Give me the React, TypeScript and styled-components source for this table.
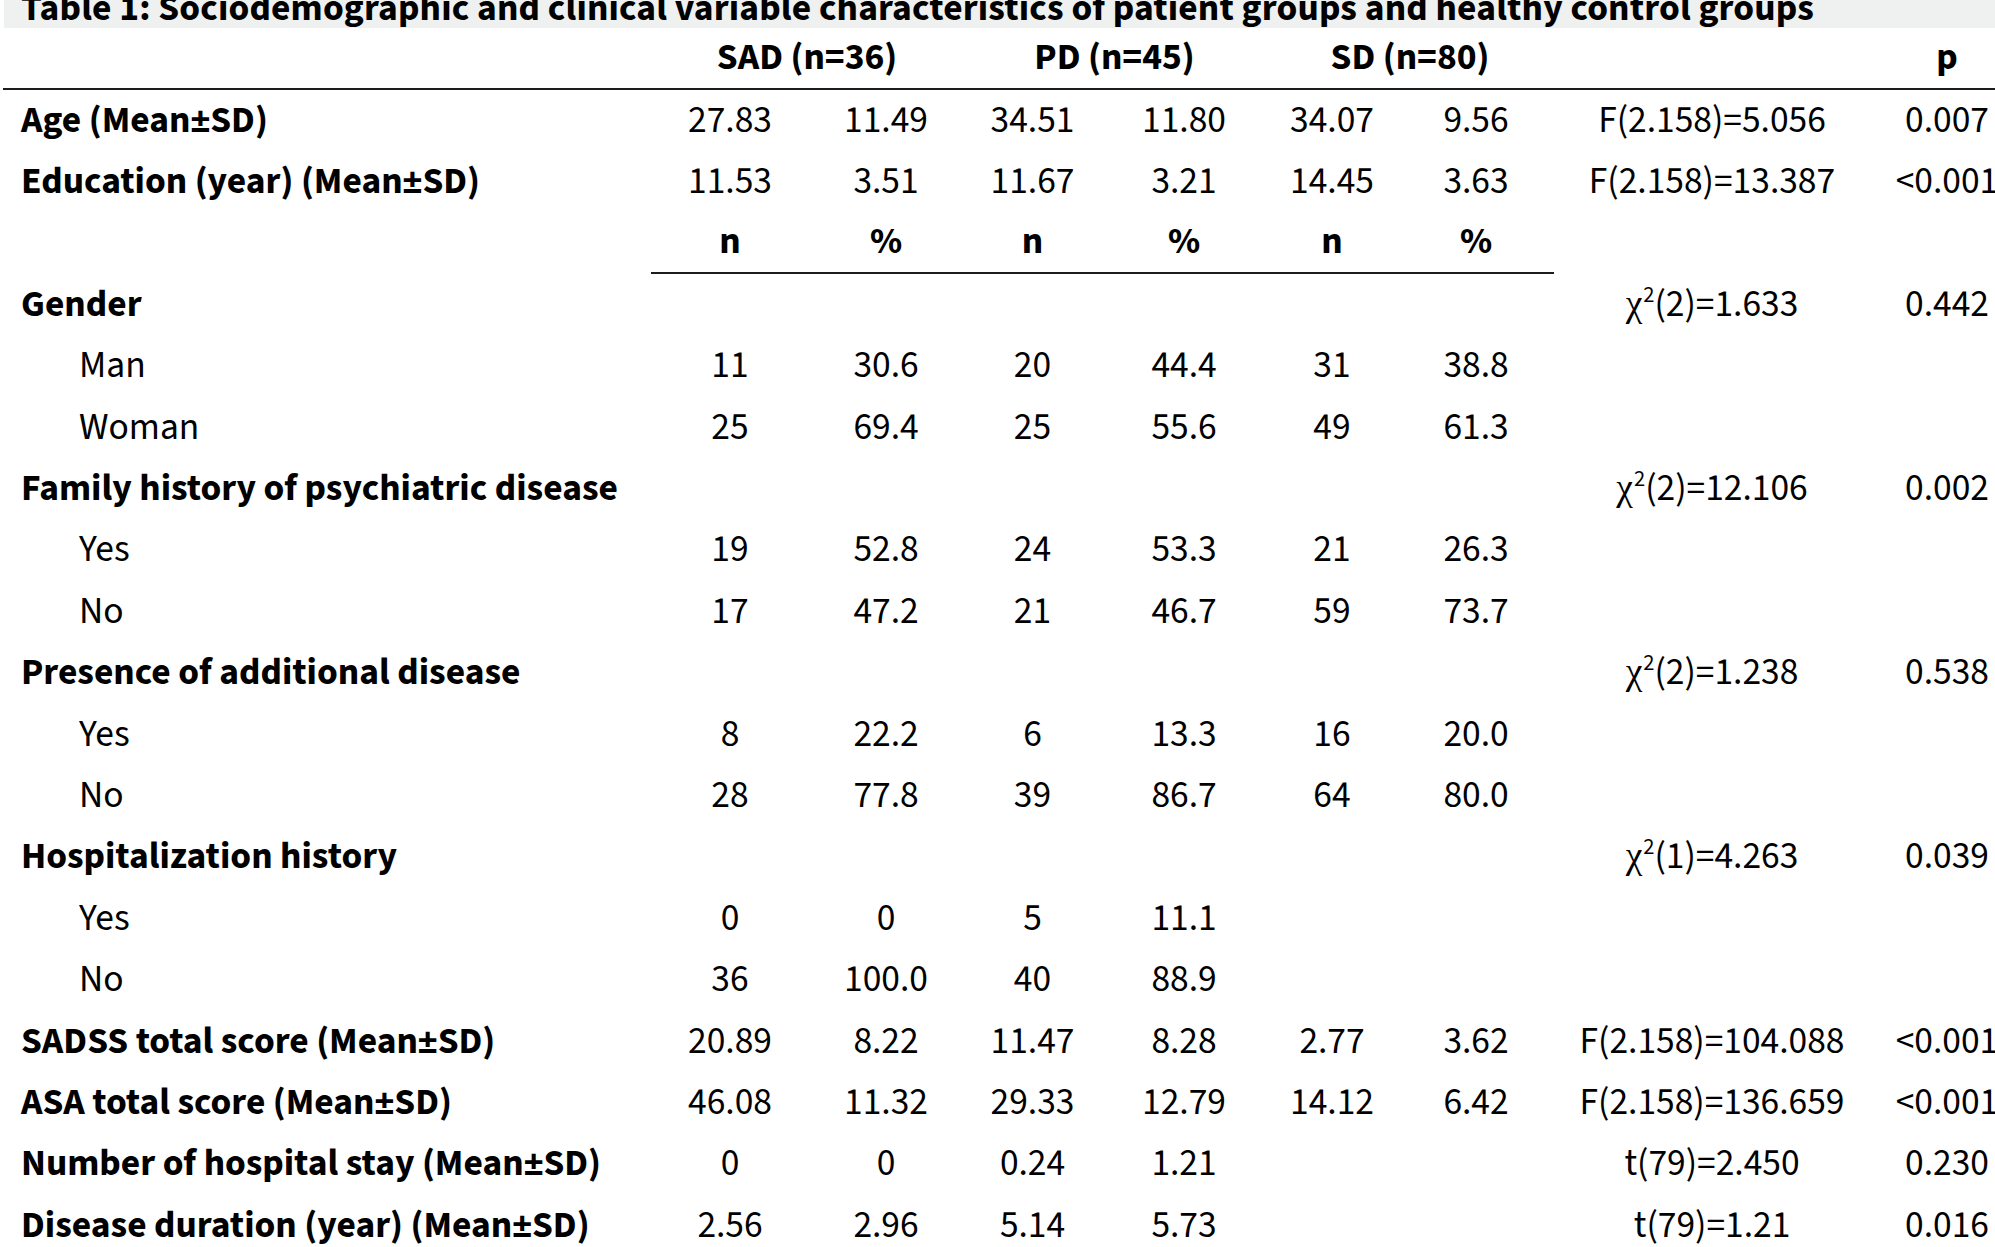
import React from "react";
import styled, { createGlobalStyle } from "styled-components";

const GlobalStyle = createGlobalStyle`
  html, body {
    margin: 0;
    padding: 0;
    background: #ffffff;
    overflow: hidden;
  }
  body {
    font-family: "Source Sans 3", "Open Sans", "Liberation Sans", sans-serif;
    color: #000;
  }
`;

const COLS = "648px 158px 154px 139px 164px 132px 156px 316px 154px";

const Figure = styled.div`
  margin: -10px 0 0 3px;
  width: 2021px;
  font-size: 37.5px;
`;

const TitleBand = styled.div`
  background: #eff0f0;
  margin-left: 1px;
  padding-left: 17px;
  font-weight: 700;
  line-height: 37.5px;
  letter-spacing: 0.15px;
  white-space: nowrap;
`;

const Row = styled.div<{ $rule?: boolean; $height?: number }>`
  display: grid;
  grid-template-columns: ${COLS};
  height: ${(p) => p.$height ?? 61.4}px;
  box-sizing: border-box;
  border-bottom: ${(p) => (p.$rule ? "2px solid #1d1d1d" : "none")};
`;

const Label = styled.div<{ $indent?: boolean; $bold?: boolean }>`
  display: flex;
  align-items: center;
  padding-left: ${(p) => (p.$indent ? 76 : 18)}px;
  font-weight: ${(p) => (p.$bold ? 700 : 400)};
  white-space: nowrap;
`;

const Cell = styled.div<{ $bold?: boolean; $span?: number; $underline?: boolean }>`
  display: flex;
  align-items: center;
  justify-content: center;
  white-space: nowrap;
  box-sizing: border-box;
  font-weight: ${(p) => (p.$bold ? 700 : 400)};
  grid-column: span ${(p) => p.$span ?? 1};
  border-bottom: ${(p) => (p.$underline ? "2px solid #1d1d1d" : "none")};
`;

const Stat = styled.span`
  display: inline-flex;
  align-items: baseline;
`;

const Chi = styled.span`
  font-family: "Liberation Serif", "DejaVu Serif", serif;
  font-size: 1em;
`;

const Sup = styled.span`
  font-size: 0.6em;
  position: relative;
  top: -0.62em;
  margin-left: 1px;
  line-height: 0;
`;

interface DataRow {
  label: string;
  bold?: boolean;
  indent?: boolean;
  values?: string[];
  test?: React.ReactNode;
  p?: string;
}

const chi = (df: number, v: string) => (
  <Stat>
    <Chi>χ</Chi>
    <Sup>2</Sup>
    <span>
      ({df})={v}
    </span>
  </Stat>
);

const rowsTop: DataRow[] = [
  {
    label: "Age (Mean±SD)",
    bold: true,
    values: ["27.83", "11.49", "34.51", "11.80", "34.07", "9.56"],
    test: "F(2.158)=5.056",
    p: "0.007",
  },
  {
    label: "Education (year) (Mean±SD)",
    bold: true,
    values: ["11.53", "3.51", "11.67", "3.21", "14.45", "3.63"],
    test: "F(2.158)=13.387",
    p: "<0.001",
  },
];

const rowsBottom: DataRow[] = [
  { label: "Gender", bold: true, test: chi(2, "1.633"), p: "0.442" },
  { label: "Man", indent: true, values: ["11", "30.6", "20", "44.4", "31", "38.8"] },
  { label: "Woman", indent: true, values: ["25", "69.4", "25", "55.6", "49", "61.3"] },
  { label: "Family history of psychiatric disease", bold: true, test: chi(2, "12.106"), p: "0.002" },
  { label: "Yes", indent: true, values: ["19", "52.8", "24", "53.3", "21", "26.3"] },
  { label: "No", indent: true, values: ["17", "47.2", "21", "46.7", "59", "73.7"] },
  { label: "Presence of additional disease", bold: true, test: chi(2, "1.238"), p: "0.538" },
  { label: "Yes", indent: true, values: ["8", "22.2", "6", "13.3", "16", "20.0"] },
  { label: "No", indent: true, values: ["28", "77.8", "39", "86.7", "64", "80.0"] },
  { label: "Hospitalization history", bold: true, test: chi(1, "4.263"), p: "0.039" },
  { label: "Yes", indent: true, values: ["0", "0", "5", "11.1", "", ""] },
  { label: "No", indent: true, values: ["36", "100.0", "40", "88.9", "", ""] },
  {
    label: "SADSS total score (Mean±SD)",
    bold: true,
    values: ["20.89", "8.22", "11.47", "8.28", "2.77", "3.62"],
    test: "F(2.158)=104.088",
    p: "<0.001",
  },
  {
    label: "ASA total score (Mean±SD)",
    bold: true,
    values: ["46.08", "11.32", "29.33", "12.79", "14.12", "6.42"],
    test: "F(2.158)=136.659",
    p: "<0.001",
  },
  {
    label: "Number of hospital stay (Mean±SD)",
    bold: true,
    values: ["0", "0", "0.24", "1.21", "", ""],
    test: "t(79)=2.450",
    p: "0.230",
  },
  {
    label: "Disease duration (year) (Mean±SD)",
    bold: true,
    values: ["2.56", "2.96", "5.14", "5.73", "", ""],
    test: "t(79)=1.21",
    p: "0.016",
  },
];

const DataLine: React.FC<{ row: DataRow }> = ({ row }) => {
  const values = row.values ?? ["", "", "", "", "", ""];
  return (
    <Row>
      <Label $bold={row.bold} $indent={row.indent}>
        {row.label}
      </Label>
      {values.map((v, i) => (
        <Cell key={i}>{v}</Cell>
      ))}
      <Cell>{row.test}</Cell>
      <Cell>{row.p}</Cell>
    </Row>
  );
};

export default function App() {
  return (
    <>
      <GlobalStyle />
      <Figure>
        <TitleBand>
          Table 1: Sociodemographic and clinical variable characteristics of patient groups and healthy control groups
        </TitleBand>
        <Row $rule $height={62}>
          <Label />
          <Cell $bold $span={2}>SAD (n=36)</Cell>
          <Cell $bold $span={2}>PD (n=45)</Cell>
          <Cell $bold $span={2}>SD (n=80)</Cell>
          <Cell />
          <Cell $bold>p</Cell>
        </Row>
        {rowsTop.map((r, i) => (
          <DataLine key={`t${i}`} row={r} />
        ))}
        <Row>
          <Label />
          {["n", "%", "n", "%", "n", "%"].map((h, i) => (
            <Cell key={i} $bold $underline>
              {h}
            </Cell>
          ))}
          <Cell />
          <Cell />
        </Row>
        {rowsBottom.map((r, i) => (
          <DataLine key={`b${i}`} row={r} />
        ))}
      </Figure>
    </>
  );
}
